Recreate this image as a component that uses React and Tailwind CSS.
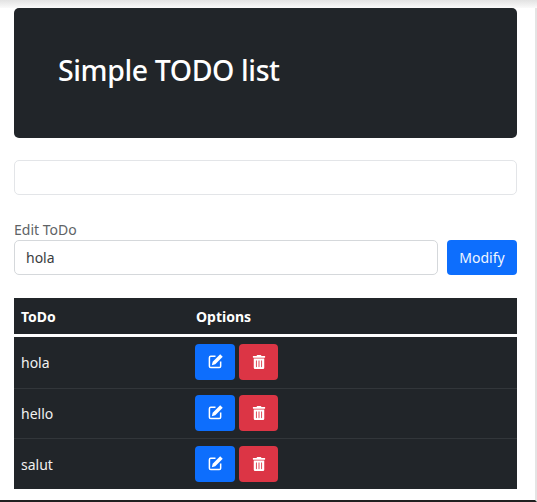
import React from 'react'
import { FaTrashAlt } from 'react-icons/fa'

const todos = ['hola', 'hello', 'salut']

// square outline with a solid pencil
const EditIcon = () => (
  <svg width="15" height="15" viewBox="0 0 16 16" fill="none">
    <path d="M8 2.5H3a1.5 1.5 0 0 0-1.5 1.5v9A1.5 1.5 0 0 0 3 14.5h9a1.5 1.5 0 0 0 1.5-1.5V8" stroke="currentColor" strokeWidth="1.6" />
    <path d="M13 .3l2.7 2.7-8 8-3.6.9.9-3.6z" fill="currentColor" />
  </svg>
)

const App = () => {
  return (
    <div className="w-[537px] h-[502px] overflow-hidden flex flex-col bg-white font-['Noto_Sans',sans-serif] text-[#212529]">
      <div className="h-[8px] shrink-0 bg-gradient-to-b from-[#e2e2e2] to-[#fafafa]"></div>
      <div className="flex-1 pl-[14px] pr-[18px] border-r-2 border-[#e4e4e4] border-b-2 border-b-[#202020]">
        {/* Header */}
        <div className="h-[130px] bg-[#212529] rounded-[5px] flex items-center pl-[44px] pb-[6px] text-white">
          <h1 className="text-[28.5px] font-medium tracking-[-0.4px]">Simple TODO list</h1>
        </div>

        <input className="block w-full h-[35px] mt-[22px] bg-white border border-[#e3e5e8] rounded-[5px]" />

        {/* Edit form */}
        <label className="block mt-[25px] h-[20px] text-[14px] leading-[20px] text-[#606366]">Edit ToDo</label>
        <div className="flex gap-[9px]">
          <input
            readOnly
            value="hola"
            className="flex-1 min-w-0 h-[35px] px-[11px] text-[14px] bg-white border border-[#d5d8db] rounded-[5px] text-[#3a3d40]"
          />
          <button className="w-[70px] h-[35px] bg-[#0d6efd] text-[#f0f6ff] text-[14px] rounded-[4px]">Modify</button>
        </div>

        {/* Table */}
        <div className="mt-[23px] bg-[#212529] text-white">
          <div className="h-[36px] flex items-center text-[14px] font-bold border-b-[3px] border-white box-content">
            <span className="w-[182px] pl-[7px]">ToDo</span>
            <span>Options</span>
          </div>
          {todos.map((todo, i) => (
            <div key={todo} className={`h-[50.67px] flex items-center text-[14px] text-[#f1f1f1] ${i > 0 ? 'border-t border-[#32363a]' : ''}`}>
              <span className="w-[181px] pl-[7px]">{todo}</span>
              <div className="flex gap-[4px] mb-[1px]">
                <button className="w-[40px] h-[36px] flex items-center justify-center bg-[#0d6efd] rounded-[4px] text-white">
                  <EditIcon />
                </button>
                <button className="w-[39px] h-[36px] flex items-center justify-center bg-[#dc3545] rounded-[4px] text-white">
                  <FaTrashAlt size={14} />
                </button>
              </div>
            </div>
          ))}
        </div>
      </div>
    </div>
  )
}

export default App
